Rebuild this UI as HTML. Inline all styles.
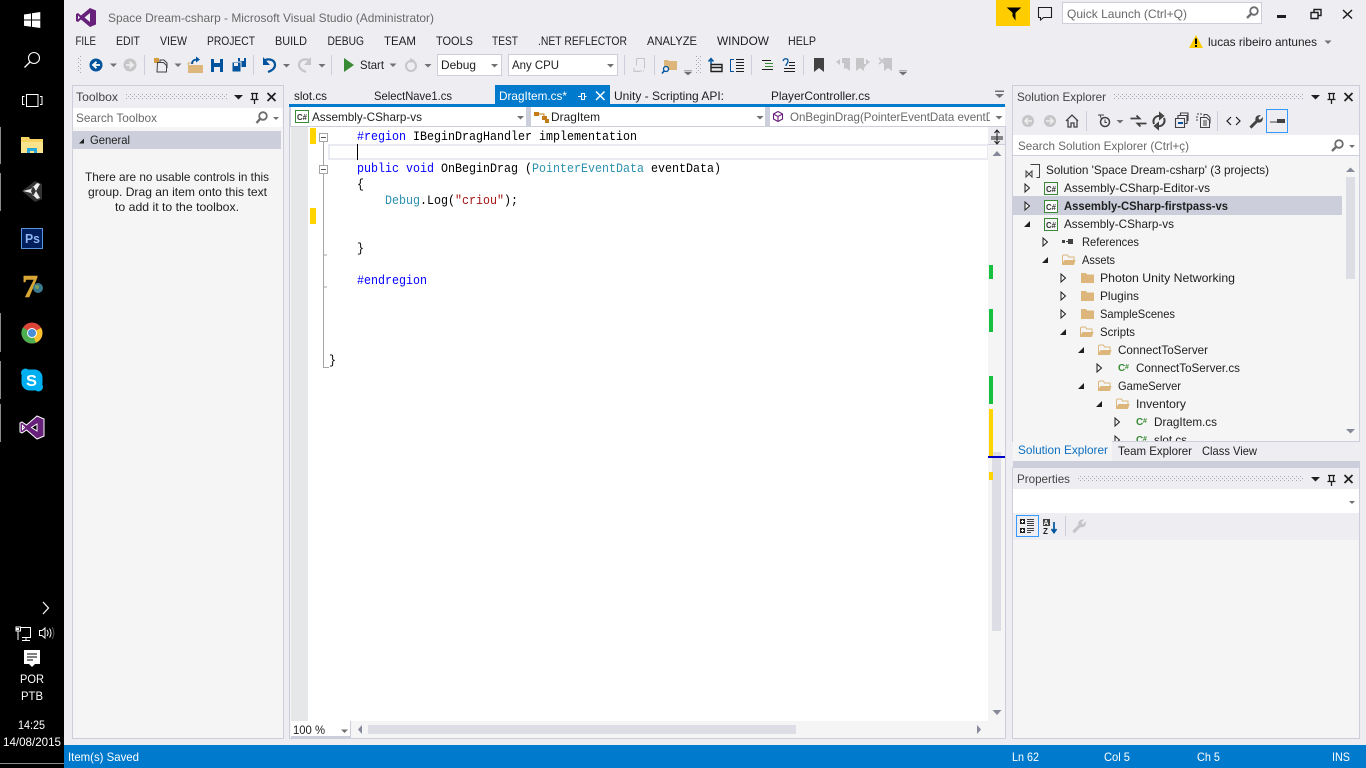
<!DOCTYPE html>
<html><head><meta charset="utf-8"><title>Space Dream-csharp - Microsoft Visual Studio</title>
<style>
html,body{margin:0;padding:0;background:#eeeef2;overflow:hidden;width:1366px;height:768px}
svg{display:block}
text{font-family:"Liberation Sans",sans-serif;font-size:12px;fill:#1e1e1e;white-space:pre}
.g{fill:#696969}.w{fill:#fff}
.c{font-family:"Liberation Mono",monospace;font-size:13px;fill:#000}
.k{fill:#00f}.ty{fill:#2b91af}.s{fill:#a31515}
.l{stroke:#c4c6d4;stroke-width:1;fill:none}
</style></head><body>
<svg xmlns="http://www.w3.org/2000/svg" width="1366" height="768" viewBox="0 0 1366 768">
<defs>
<pattern id="dots" width="4" height="4" patternUnits="userSpaceOnUse"><rect width="1" height="1" fill="#a5a6b0"/><rect x="2" y="2" width="1" height="1" fill="#a5a6b0"/></pattern>
<clipPath id="c3"><rect x="770" y="107" width="220" height="19"/></clipPath>
<clipPath id="treeclip"><rect x="1013" y="156" width="346" height="285"/></clipPath>
<path id="exp" d="M.5 .5L5 4.5L.5 8.5Z" fill="#f5f5f5" stroke="#1e1e1e"/>
<path id="col" d="M6 0V6H0Z" fill="#1e1e1e"/>
<path id="fc" d="M0 1h5l1 1.500h7V11H0Z" fill="#dcb67a"/>
<g id="fo"><path d="M.5 11V2l1-1h4l1 2h5.500v3" fill="none" stroke="#dcb67a"/><path d="M0 11V10L2.500 6H13.500L12 11Z" fill="#dcb67a"/></g>
<path id="dd" d="M0 0h7l-3.500 3.500Z" fill="#717171"/>
<g id="pinx"><path d="M0 0h9l-4.500 4.500Z" fill="#1e1e1e" transform="translate(0,3)"/><path d="M17 1.500h7M18.500 1.500v6h4v-6M16.500 7.500h8M20.500 7.500v4.500" stroke="#1e1e1e" fill="none" stroke-width="1.300"/><path d="M33.500 1l8 8M41.500 1l-8 8" stroke="#1e1e1e" stroke-width="1.700" fill="none"/></g>
</defs>

<rect width="1366" height="768" fill="#eeeef2"/>

<!-- taskbar -->
<rect x="0" y="0" width="64" height="768" fill="#000"/>
<rect x="0" y="127" width="1" height="37" fill="#8a8a8a"/><rect x="0" y="173" width="1" height="38" fill="#8a8a8a"/><rect x="0" y="313" width="1" height="39" fill="#8a8a8a"/><rect x="0" y="361" width="1" height="38" fill="#8a8a8a"/><rect x="0" y="404" width="1" height="38" fill="#8a8a8a"/>
<rect x="0" y="763" width="64" height="1" fill="#8c8c8c"/>
<path d="M24 14.500L31 13.500V19.500H24ZM32 13.300L40.300 12V19.500H32ZM24 20.500H31V26.800L24 25.800ZM32 20.500H40.300V28L32 26.900Z" fill="#fff"/>
<circle cx="34" cy="58" r="5.500" fill="none" stroke="#fff" stroke-width="1.100"/><path d="M30 62L24.500 67.500" stroke="#fff" stroke-width="1.300"/>
<path d="M26.500 94.500h11.500v12h-11.500ZM24.500 96.500h-2v8h2M40 96.500h2v8h-2" fill="none" stroke="#fff"/>
<!-- explorer -->
<path d="M21 137h8l1 2h13v14H21Z" fill="#f6d365"/><rect x="21" y="142" width="22" height="11" fill="#fbe38e"/><path d="M27 153v-5h10v5h-3v-2h-4v2Z" fill="#27a7e0"/>
<!-- unity -->
<path d="M22 191L35 181l7 3 0 15-7 3Z" fill="#333"/><path d="M23 191l8-2 6-6 3 1-4 7 4 7-3 1-6-6ZM31 191h5l-3-5ZM31 191h5l-3 5Z" fill="#eee" fill-rule="evenodd"/>
<!-- ps -->
<rect x="21.500" y="228.500" width="21" height="20" fill="#001d5c" stroke="#5a94dc"/>
<text x="25" y="243" style="font-size:13px;font-weight:bold;fill:#8fb9f0" textLength="15" lengthAdjust="spacingAndGlyphs">Ps</text>
<!-- 7 -->
<text x="22" y="297" style="font-family:'Liberation Serif',serif;font-size:32px;font-weight:bold;fill:#d8a636;stroke:#d8a636;stroke-width:.6" textLength="16" lengthAdjust="spacingAndGlyphs">7</text>
<circle cx="38" cy="288" r="5" fill="#3a7a8c"/><circle cx="37" cy="287" r="2" fill="#7aa05a"/>
<!-- chrome -->
<circle cx="32" cy="333" r="10.500" fill="#db4437"/><path d="M32 333L22.900 338.250A10.500 10.500 0 0 1 23 327.500Z" fill="#4caf50"/><path d="M32 333L22.900 338.250A10.500 10.500 0 0 0 41.100 338.250Z" fill="#4caf50"/><path d="M32 333L41.100 327.750A10.500 10.500 0 0 1 36 342.700Z" fill="#fbc02d"/><circle cx="32" cy="333" r="5" fill="#fff"/><circle cx="32" cy="333" r="4" fill="#4a8ed8"/>
<!-- skype -->
<rect x="21.500" y="369.500" width="21" height="21" rx="8" fill="#00aff0"/><circle cx="25.500" cy="373" r="4.500" fill="#00aff0"/><circle cx="38.500" cy="387" r="4.500" fill="#00aff0"/>
<text x="26" y="386" style="font-size:16px;font-weight:bold;fill:#fff" textLength="11" lengthAdjust="spacingAndGlyphs">S</text>
<!-- VS taskbar -->
<path d="M37 416L44 419V436L37 439L26.500 430L22 433L20 432V423L22 422L26.500 425ZM37 424L31.500 427.500L37 431ZM22.500 425.500V429.500L24.500 427.500Z" fill="#68217a" stroke="#fff" stroke-width="1" fill-rule="evenodd"/>
<!-- tray -->
<path d="M43 602l5.500 6-5.500 6" stroke="#fff" fill="none" stroke-width="1.200"/>
<path d="M20.500 627.500h10v10h-8.500M16 627h4.500v4H16ZM18 631v9M26 637.500v3M22 640.500h8" stroke="#fff" fill="none"/><rect x="16" y="628" width="3" height="2" fill="#fff"/>
<path d="M39.500 630.500h2.500l3-2.500v10l-3-2.500h-2.500ZM47 630c1.500 2 1.500 4 0 6M49.500 628.500c2 3 2 6 0 9" stroke="#fff" fill="none"/><path d="M52 627c2.500 4 2.500 8 0 12" stroke="#555" fill="none"/>
<path d="M24 650h16v14h-5l-3 3-3-3h-5Z" fill="#fff"/><path d="M27 654h10M27 657h10M27 660h6" stroke="#000"/>
<text x="20" y="683" class="w" textLength="24" lengthAdjust="spacingAndGlyphs">POR</text>
<text x="21" y="700" class="w" textLength="22" lengthAdjust="spacingAndGlyphs">PTB</text>
<text x="18" y="729" class="w" textLength="27" lengthAdjust="spacingAndGlyphs">14:25</text>
<text x="3" y="746" class="w" textLength="58" lengthAdjust="spacingAndGlyphs">14/08/2015</text>

<!-- title -->
<path d="M90 8L96 10.500V24.500L90 27L81 19.500L78 22L76 21V14L78 13L81 15.500ZM90 13L84.500 17.500L90 22ZM78 15.500V19.500L80 17.500Z" fill="#68217a" fill-rule="evenodd"/>
<text x="108" y="22" class="g" textLength="326" lengthAdjust="spacingAndGlyphs">Space Dream-csharp - Microsoft Visual Studio (Administrator)</text>

<!-- menu -->
<text x="75.500" y="45" textLength="20.500" lengthAdjust="spacingAndGlyphs">FILE</text>
<text x="116" y="45" textLength="24" lengthAdjust="spacingAndGlyphs">EDIT</text>
<text x="160" y="45" textLength="27" lengthAdjust="spacingAndGlyphs">VIEW</text>
<text x="207" y="45" textLength="48" lengthAdjust="spacingAndGlyphs">PROJECT</text>
<text x="275" y="45" textLength="32" lengthAdjust="spacingAndGlyphs">BUILD</text>
<text x="327.500" y="45" textLength="36.500" lengthAdjust="spacingAndGlyphs">DEBUG</text>
<text x="384" y="45" textLength="32" lengthAdjust="spacingAndGlyphs">TEAM</text>
<text x="436" y="45" textLength="37" lengthAdjust="spacingAndGlyphs">TOOLS</text>
<text x="492" y="45" textLength="26" lengthAdjust="spacingAndGlyphs">TEST</text>
<text x="538" y="45" textLength="89" lengthAdjust="spacingAndGlyphs">.NET REFLECTOR</text>
<text x="647" y="45" textLength="50" lengthAdjust="spacingAndGlyphs">ANALYZE</text>
<text x="717" y="45" textLength="52" lengthAdjust="spacingAndGlyphs">WINDOW</text>
<text x="788" y="45" textLength="28" lengthAdjust="spacingAndGlyphs">HELP</text>

<!-- top right -->
<rect x="996" y="0" width="34" height="26" fill="#ffcc00"/>
<path d="M1008 8h12l-5 4.500v6.500l-2-3v-3.500Z" fill="#000" stroke="#000"/>
<path d="M1038.500 7.500h13v10h-8l-3 2.500v-2.500h-2Z" fill="none" stroke="#1e1e1e" stroke-width="1.100"/>
<rect x="1062.500" y="2.500" width="199" height="21" fill="#fff" stroke="#ccced9"/>
<text x="1067" y="18" class="g" textLength="120" lengthAdjust="spacingAndGlyphs">Quick Launch (Ctrl+Q)</text>
<circle cx="1254" cy="11" r="3.800" fill="none" stroke="#6d6d70" stroke-width="1.800"/><path d="M1251 14l-4 4" stroke="#6d6d70" stroke-width="2.300"/>
<rect x="1277" y="15" width="9" height="3" fill="#1e1e1e"/>
<path d="M1311 12.500h7v6h-7ZM1314 12v-2.500h7v6h-3" fill="none" stroke="#1e1e1e" stroke-width="1.400"/>
<path d="M1343 10l9 8.500M1352 10l-9 8.500" stroke="#1e1e1e" stroke-width="1.500"/>
<path d="M1196 35l7 13h-14Z" fill="#ffcc00"/><rect x="1195" y="38.500" width="2" height="5.500" fill="#000"/><rect x="1195" y="45" width="2" height="2" fill="#000"/>
<text x="1208" y="46" textLength="109" lengthAdjust="spacingAndGlyphs">lucas ribeiro antunes</text>
<use href="#dd" x="1324.500" y="40.500"/>

<!-- toolbar -->
<rect x="77" y="56" width="5" height="18" fill="url(#dots)"/>
<circle cx="96" cy="65" r="6.500" fill="#00539c"/><path d="M100 65h-6M96.500 61.800L93 65l3.500 3.200" stroke="#fff" stroke-width="1.800" fill="none"/>
<use href="#dd" x="110" y="63.500"/>
<circle cx="130" cy="65" r="6.500" fill="#c6c6c8"/><path d="M126 65h6M129.500 61.800L133 65l-3.500 3.200" stroke="#eee" stroke-width="1.800" fill="none"/>
<rect x="144" y="55" width="1" height="20" fill="#cccedb"/>
<rect x="154" y="58" width="5" height="5" fill="#d69a42"/>
<path d="M157.500 62.500h6l3 3v6.500h-9.500ZM160 62.500V60h4l3 3v5" fill="#eeeef2" stroke="#424242"/>
<use href="#dd" x="174.500" y="63.500"/>
<path d="M188 65h15v8h-15Z" fill="#dcb67a"/><path d="M188 65v-2h6" stroke="#dcb67a" fill="none"/>
<path d="M192 64c0-3 2-4.500 5-4.500" stroke="#00539c" stroke-width="1.800" fill="none"/><path d="M196 56.500l4 3-4 3Z" fill="#00539c"/>
<path d="M211 59h12v13h-12Z" fill="#00539c"/><rect x="214" y="59" width="6" height="4" fill="#eeeef2"/><rect x="214" y="67" width="6" height="5" fill="#eeeef2"/>
<path d="M238 58h8v9h-8Z" fill="#00539c"/><rect x="240" y="58" width="4" height="3" fill="#eeeef2"/>
<path d="M232 62h9v10h-9Z" fill="#00539c" stroke="#eeeef2"/><rect x="234" y="63" width="4" height="3" fill="#eeeef2"/>
<rect x="253" y="55" width="1" height="20" fill="#cccedb"/>
<path d="M265 60c6-2 10 1 10 5 0 3-3 5.500-7 7" stroke="#00539c" stroke-width="2.200" fill="none"/><path d="M263 57v8h7Z" fill="#00539c"/>
<use href="#dd" x="283" y="64"/>
<path d="M309 60c-6-2-10 1-10 5 0 3 3 5.500 7 7" stroke="#c6c6c8" stroke-width="2.200" fill="none"/><path d="M311 57v8h-7Z" fill="#c6c6c8"/>
<use href="#dd" x="318.500" y="64"/>
<rect x="331" y="55" width="1" height="20" fill="#cccedb"/>
<path d="M344 58l10 7-10 7Z" fill="#388a34"/>
<text x="360" y="69" textLength="24" lengthAdjust="spacingAndGlyphs">Start</text>
<use href="#dd" x="389.500" y="63.500"/>
<circle cx="411" cy="66" r="5" fill="none" stroke="#c6c6c8" stroke-width="2"/><path d="M410 58l5 2.500-5 2.500Z" fill="#c6c6c8"/>
<use href="#dd" x="424.500" y="64"/>
<rect x="437.500" y="54.500" width="64" height="21" fill="#fff" stroke="#cccedb"/>
<text x="441" y="69" textLength="35" lengthAdjust="spacingAndGlyphs">Debug</text>
<use href="#dd" x="491" y="64"/>
<rect x="508.500" y="54.500" width="109" height="21" fill="#fff" stroke="#cccedb"/>
<text x="512" y="69" textLength="47" lengthAdjust="spacingAndGlyphs">Any CPU</text>
<use href="#dd" x="607" y="64"/>
<rect x="624" y="55" width="1" height="20" fill="#cccedb"/>
<path d="M636.500 58.500h8v10M634 68v3.500h6M636.500 58.500v7" stroke="#c6c6c8" fill="none"/><path d="M634 71h10" stroke="#c6c6c8" stroke-dasharray="2 1"/>
<rect x="654" y="55" width="1" height="20" fill="#cccedb"/>
<path d="M664 60h4l1 1h8v9h-13Z" fill="#dcb67a"/><circle cx="666" cy="69" r="2.500" fill="#eeeef2" stroke="#00539c" stroke-width="1.300"/><path d="M664 71l-2 2.500" stroke="#00539c" stroke-width="1.500"/>
<path d="M684 70.500h8M684.500 72l3.500 3 3.500-3Z" fill="#717171" stroke="#717171" stroke-width=".6"/>
<rect x="696" y="56" width="5" height="18" fill="url(#dots)"/>
<path d="M711 64.500h11v7h-11ZM711 67.500h11" stroke="#1e1e1e" stroke-width="1.400" fill="none"/><path d="M711 64v-5M708.500 61.500l2.500-3 2.500 3" stroke="#00539c" stroke-width="1.500" fill="none"/>
<path d="M736 59.500h8M736 62.500h8M736 65.500h8M736 68.500h8M736 71.500h8" stroke="#1e1e1e"/><path d="M734 59.500h-3.500v12h3.500" stroke="#00539c" fill="none"/>
<rect x="751" y="55" width="1" height="20" fill="#cccedb"/>
<path d="M762 60.500h9M762 69.500h11" stroke="#1e1e1e"/><path d="M765 63.500h8M765 66.500h8" stroke="#388a34"/>
<path d="M789 62.500h6M789 65.500h6M784 68.500h11M784 71.500h11" stroke="#1e1e1e"/><path d="M783 61c1-3 5-3 5 0s-2 2-2 5" stroke="#00539c" fill="none" stroke-width="1.300"/>
<rect x="803" y="55" width="1" height="20" fill="#cccedb"/>
<path d="M814 58h10v14l-5-4-5 4Z" fill="#424242"/>
<path d="M842 58h8v13l-4-3-2 1v-6h-2ZM836 62l4-3v6Z" fill="#c6c6c8"/>
<path d="M856 58h8v6h3l-3 4v3l-4-3-4 3ZM866 59l4 3-4 3Z" fill="#c6c6c8"/>
<path d="M884 58h8v13l-4-3-4 3Z" fill="#c6c6c8"/><path d="M879 58l6 6M885 58l-6 6" stroke="#c6c6c8" stroke-width="1.600"/>
<path d="M899 70.500h8M899.500 72l3.500 3 3.500-3Z" fill="#717171" stroke="#717171" stroke-width=".6"/>

<!-- Toolbox panel -->
<rect x="72.500" y="85.500" width="211" height="653" fill="#f5f5f5" stroke="#cccedb"/>
<rect x="73" y="86" width="210" height="22" fill="#eeeef2"/>
<text x="76" y="101" style="fill:#444" textLength="42" lengthAdjust="spacingAndGlyphs">Toolbox</text>
<rect x="125" y="94" width="103" height="5" fill="url(#dots)"/>
<use href="#pinx" x="234" y="92"/>
<rect x="73" y="108" width="209" height="19" fill="#fff"/>
<text x="76" y="122" class="g" textLength="81" lengthAdjust="spacingAndGlyphs">Search Toolbox</text>
<circle cx="263" cy="116" r="3.800" fill="none" stroke="#6d6d70" stroke-width="1.800"/><path d="M260 119l-3.500 4" stroke="#6d6d70" stroke-width="2.300"/>
<path d="M273 117h6l-3 3Z" fill="#717171"/>
<rect x="73" y="131" width="208" height="18" fill="#cccedb"/>
<path d="M84 138.500V143.500H79Z" fill="#1e1e1e"/>
<text x="90" y="144" textLength="40" lengthAdjust="spacingAndGlyphs">General</text>
<text x="85" y="181" textLength="184" lengthAdjust="spacingAndGlyphs">There are no usable controls in this</text>
<text x="88" y="196" textLength="179" lengthAdjust="spacingAndGlyphs">group. Drag an item onto this text</text>
<text x="115" y="211" textLength="124" lengthAdjust="spacingAndGlyphs">to add it to the toolbox.</text>

<!-- Editor -->
<text x="294" y="100" textLength="33" lengthAdjust="spacingAndGlyphs">slot.cs</text>
<text x="374" y="100" textLength="78" lengthAdjust="spacingAndGlyphs">SelectNave1.cs</text>
<rect x="495" y="85" width="115" height="19" fill="#007acc"/>
<text x="499" y="100" class="w" textLength="68" lengthAdjust="spacingAndGlyphs">DragItem.cs*</text>
<path d="M578 96.500h3M581.500 93.500v6h3v-6ZM584.500 96.500h2" stroke="#fff" fill="none"/>
<path d="M596 91.500l8.500 8.500M604.500 91.500L596 100" stroke="#fff" stroke-width="1.500"/>
<text x="614" y="100" textLength="110" lengthAdjust="spacingAndGlyphs">Unity - Scripting API:</text>
<text x="771" y="100" textLength="99" lengthAdjust="spacingAndGlyphs">PlayerController.cs</text>
<rect x="289" y="104" width="716" height="3" fill="#007acc"/>
<path d="M995 90.500h9v1.500h-9ZM995 94h9l-4.500 4Z" fill="#717171"/>
<rect x="289" y="107" width="716" height="632" fill="#f5f5f5"/>
<rect x="289" y="107" width="716" height="20" fill="#cccedb"/>
<rect x="291" y="107" width="235" height="19" fill="#fff"/>
<rect x="531" y="107" width="234" height="19" fill="#fff"/>
<rect x="770" y="107" width="235" height="19" fill="#fff"/>
<rect x="295.500" y="110.500" width="13" height="12" fill="#fff" stroke="#388a34"/>
<text x="297" y="120" style="font-size:8px;font-weight:bold;fill:#333" textLength="10" lengthAdjust="spacingAndGlyphs">C#</text>
<text x="312" y="121" textLength="110" lengthAdjust="spacingAndGlyphs">Assembly-CSharp-vs</text>
<use href="#dd" x="517" y="116"/>
<path d="M534 112h5v4h-5ZM542 116h5v4h-5ZM545 119h4v4h-4Z" fill="#c27d1a"/><path d="M538 114h6v3M545 119v1" stroke="#c27d1a" fill="none"/>
<text x="551" y="121" textLength="49" lengthAdjust="spacingAndGlyphs">DragItem</text>
<use href="#dd" x="756.500" y="116"/>
<path d="M778 111.500l4.500 2.500v5l-4.500 2.500-4.500-2.500v-5ZM773.500 114l4.500 2.500 4.500-2.500M778 116.500v5" fill="none" stroke="#68217a" stroke-width="1.100"/>
<g clip-path="url(#c3)"><text x="790" y="121" class="g" textLength="224" lengthAdjust="spacingAndGlyphs">OnBeginDrag(PointerEventData eventData)</text></g>
<use href="#dd" x="995.500" y="116"/>

<rect x="291" y="127" width="17" height="594" fill="#e6e7e8"/>
<rect x="308" y="127" width="680" height="594" fill="#fff"/>
<rect x="310" y="128" width="6" height="16" fill="#ffd400"/>
<rect x="310" y="208" width="6" height="16" fill="#ffd400"/>
<path d="M323.500 142v225.500H329M324 255h3M324 287h3" stroke="#a5a5a5" fill="none"/>
<rect x="319.500" y="133.500" width="8" height="8" fill="#fff" stroke="#a5a5a5"/><path d="M321 137.500h5" stroke="#555"/>
<rect x="319.500" y="165.500" width="8" height="8" fill="#fff" stroke="#a5a5a5"/><path d="M321 169.500h5" stroke="#555"/>
<rect x="329" y="145" width="659" height="14" fill="#fff" stroke="#eaeaf2" stroke-width="2"/>
<rect x="357" y="144" width="1" height="16" fill="#000"/>

<text x="357" y="140" class="c k" textLength="49" lengthAdjust="spacingAndGlyphs">#region</text>
<text x="413" y="140" class="c" textLength="224" lengthAdjust="spacingAndGlyphs">IBeginDragHandler implementation</text>
<text x="357" y="172" class="c k" textLength="42" lengthAdjust="spacingAndGlyphs">public</text>
<text x="406" y="172" class="c k" textLength="28" lengthAdjust="spacingAndGlyphs">void</text>
<text x="441" y="172" class="c" textLength="77" lengthAdjust="spacingAndGlyphs">OnBeginDrag</text>
<text x="525" y="172" class="c" textLength="7" lengthAdjust="spacingAndGlyphs">(</text>
<text x="532" y="172" class="c ty" textLength="112" lengthAdjust="spacingAndGlyphs">PointerEventData</text>
<text x="651" y="172" class="c" textLength="70" lengthAdjust="spacingAndGlyphs">eventData)</text>
<text x="357" y="188" class="c" textLength="7" lengthAdjust="spacingAndGlyphs">{</text>
<text x="385" y="204" class="c ty" textLength="35" lengthAdjust="spacingAndGlyphs">Debug</text>
<text x="420" y="204" class="c" textLength="35" lengthAdjust="spacingAndGlyphs">.Log(</text>
<text x="455" y="204" class="c s" textLength="49" lengthAdjust="spacingAndGlyphs">"criou"</text>
<text x="504" y="204" class="c" textLength="14" lengthAdjust="spacingAndGlyphs">);</text>
<text x="357" y="252" class="c" textLength="7" lengthAdjust="spacingAndGlyphs">}</text>
<text x="357" y="284" class="c k" textLength="70" lengthAdjust="spacingAndGlyphs">#endregion</text>
<text x="329" y="364" class="c" textLength="7" lengthAdjust="spacingAndGlyphs">}</text>

<!-- editor vertical scrollbar -->
<rect x="988" y="127" width="17" height="594" fill="#f5f5f5"/>
<rect x="988" y="127" width="17" height="17" fill="#eeeef2"/><rect x="988" y="144" width="17" height="1" fill="#cccedb"/>
<path d="M997 130.500v13M991 137h12M991 139h12M994.500 133l2.500-3 2.500 3M994.500 141l2.500 3 2.500-3" stroke="#1e1e1e" fill="none"/>
<path d="M992.500 156l4.500-5 4.500 5Z" fill="#868999"/>
<rect x="992" y="452" width="9" height="179" fill="#dddde5"/>
<rect x="989" y="265" width="4" height="14" fill="#17c03f"/>
<rect x="989" y="309" width="4" height="23" fill="#17c03f"/>
<rect x="989" y="376" width="4" height="28" fill="#17c03f"/>
<rect x="989" y="409" width="4" height="47" fill="#ffd400"/>
<rect x="989" y="472" width="4" height="8" fill="#ffd400"/>
<rect x="988" y="456" width="17" height="2" fill="#0000c8"/>
<path d="M992.500 710l4.500 5 4.500-5Z" fill="#868999"/>
<!-- editor hscroll -->
<rect x="291" y="721" width="714" height="17" fill="#f5f5f5"/>
<rect x="291" y="721" width="60" height="17" fill="#fff"/><rect x="291" y="736" width="60" height="2" fill="#cccedb"/><rect x="350" y="721" width="1" height="17" fill="#cccedb"/>
<text x="293" y="734" style="fill:#222" textLength="32" lengthAdjust="spacingAndGlyphs">100 %</text>
<use href="#dd" x="341" y="729.500"/>
<path d="M362 725v9l-4-4.500Z" fill="#868999"/>
<rect x="368" y="725" width="428" height="9" fill="#dddde5"/>
<path d="M977 725v9l4-4.500Z" fill="#868999"/>
<rect x="289.500" y="126.500" width="716" height="612" fill="none" stroke="#cccedb"/>

<!-- Solution Explorer -->
<rect x="1012.500" y="85.500" width="347" height="356" fill="#f5f5f5" stroke="#cccedb"/>
<rect x="1013" y="86" width="346" height="70" fill="#eeeef2"/>
<text x="1017" y="101" style="fill:#444" textLength="89" lengthAdjust="spacingAndGlyphs">Solution Explorer</text>
<rect x="1114" y="94" width="189" height="5" fill="url(#dots)"/>
<use href="#pinx" x="1311" y="92"/>
<!-- SE toolbar -->
<circle cx="1028" cy="121" r="6" fill="#c6c6c8"/><path d="M1032 121h-6M1028 118l-3 3 3 3" stroke="#eee" stroke-width="1.600" fill="none"/>
<circle cx="1050" cy="121" r="6" fill="#c6c6c8"/><path d="M1046 121h6M1050 118l3 3-3 3" stroke="#eee" stroke-width="1.600" fill="none"/>
<path d="M1066 121l6-6 6 6M1068 120v7h3v-4h3v4h3v-7" stroke="#424242" stroke-width="1.300" fill="none"/>
<rect x="1086" y="111" width="1" height="20" fill="#cccedb"/>
<circle cx="1105" cy="122" r="4.500" fill="none" stroke="#424242" stroke-width="1.500"/><path d="M1098 115h6M1100 115l1.500 4M1105 119.500v3h2" stroke="#424242" fill="none"/>
<use href="#dd" x="1116.500" y="120"/>
<path d="M1131 119h9l-3-3M1147 124h-9l3 3" stroke="#424242" stroke-width="1.800" fill="none" transform="translate(-.5 -.5)"/>
<path d="M1154 124c-2-5 2-9 7-8M1164 118c2 5-2 9-7 8M1160 113.500v5l3-2.500ZM1158 123.500v5l-3-2.500Z" stroke="#424242" stroke-width="2" fill="none"/>
<path d="M1175.500 118.500h9v9h-9ZM1178 118v-2.500h9v8h-2M1180.500 115.500v-2.500h7.500v8" fill="none" stroke="#424242" stroke-width="1.100"/><rect x="1178" y="122" width="5" height="2" fill="#00539c"/>
<path d="M1197 114h2M1200 114h2M1197 116v2M1197 119v2" stroke="#424242"/><path d="M1200.500 117.500h6l3 3v7h-9ZM1203 121h4M1203 123h4M1203 125h4" fill="none" stroke="#424242"/><path d="M1204 116.500v-2h3l3 3v6" fill="none" stroke="#424242"/>
<rect x="1217" y="111" width="1" height="20" fill="#cccedb"/>
<path d="M1231 117l-4 4 4 4M1236 117l4 4-4 4" fill="none" stroke="#1e1e1e" stroke-width="1.200"/>
<path d="M1250 126.500l6-6c-1-3 1-5 4-5l-2 2 .5 2 2 .5 2-2c0 3-2 5-5 4l-6 6Z" fill="#424242" stroke="#424242" stroke-width=".8"/>
<rect x="1266.500" y="109.500" width="21" height="23" fill="#eeeef2" stroke="#3399ff"/>
<path d="M1270 122h8" stroke="#424242"/><rect x="1277" y="119" width="8" height="4" fill="#424242"/>
<rect x="1013" y="135" width="346" height="20" fill="#fff"/>
<text x="1018" y="150" class="g" textLength="171" lengthAdjust="spacingAndGlyphs">Search Solution Explorer (Ctrl+ç)</text>
<circle cx="1339" cy="144" r="3.800" fill="none" stroke="#6d6d70" stroke-width="1.800"/><path d="M1336 147l-4 4" stroke="#6d6d70" stroke-width="2.300"/>
<path d="M1349 145h6l-3 3Z" fill="#717171"/>
<rect x="1013" y="155" width="346" height="1" fill="#cccedb"/>

<g clip-path="url(#treeclip)">
<rect x="1013" y="196" width="329" height="19" fill="#cccedb"/>
<path d="M1030.500 164.500h9v13h-3M1026 171l3 3 3-3v6l-3-3-3 3Z" fill="none" stroke="#424242"/>
<text x="1046" y="174" textLength="223" lengthAdjust="spacingAndGlyphs">Solution 'Space Dream-csharp' (3 projects)</text>
<use href="#exp" x="1024.500" y="183.500"/>
<rect x="1044.500" y="182.500" width="13" height="12" fill="#f5f5f5" stroke="#388a34"/><text x="1046" y="192" style="font-size:8px;font-weight:bold;fill:#333" textLength="10" lengthAdjust="spacingAndGlyphs">C#</text>
<text x="1064" y="192" textLength="146" lengthAdjust="spacingAndGlyphs">Assembly-CSharp-Editor-vs</text>
<use href="#exp" x="1024.500" y="201.500"/>
<rect x="1044.500" y="200.500" width="13" height="12" fill="#fff" stroke="#388a34"/><text x="1046" y="210" style="font-size:8px;font-weight:bold;fill:#333" textLength="10" lengthAdjust="spacingAndGlyphs">C#</text>
<text x="1064" y="210" style="font-weight:bold" textLength="164" lengthAdjust="spacingAndGlyphs">Assembly-CSharp-firstpass-vs</text>
<use href="#col" x="1024" y="221"/>
<rect x="1044.500" y="218.500" width="13" height="12" fill="#f5f5f5" stroke="#388a34"/><text x="1046" y="228" style="font-size:8px;font-weight:bold;fill:#333" textLength="10" lengthAdjust="spacingAndGlyphs">C#</text>
<text x="1064" y="228" textLength="110" lengthAdjust="spacingAndGlyphs">Assembly-CSharp-vs</text>
<use href="#exp" x="1042.500" y="237.500"/>
<rect x="1062" y="240" width="3" height="3" fill="#424242"/><rect x="1066" y="241" width="2" height="1" fill="#424242"/><rect x="1068" y="239" width="5" height="5" fill="#424242"/>
<text x="1082" y="246" textLength="57" lengthAdjust="spacingAndGlyphs">References</text>
<use href="#col" x="1042" y="257"/>
<use href="#fo" x="1062" y="254"/>
<text x="1082" y="264" textLength="33" lengthAdjust="spacingAndGlyphs">Assets</text>
<use href="#exp" x="1060.500" y="273.500"/><use href="#fc" x="1081" y="272"/>
<text x="1100" y="282" textLength="135" lengthAdjust="spacingAndGlyphs">Photon Unity Networking</text>
<use href="#exp" x="1060.500" y="291.500"/><use href="#fc" x="1081" y="290"/>
<text x="1100" y="300" textLength="39" lengthAdjust="spacingAndGlyphs">Plugins</text>
<use href="#exp" x="1060.500" y="309.500"/><use href="#fc" x="1081" y="308"/>
<text x="1100" y="318" textLength="75" lengthAdjust="spacingAndGlyphs">SampleScenes</text>
<use href="#col" x="1060" y="329"/><use href="#fo" x="1080" y="326"/>
<text x="1100" y="336" textLength="35" lengthAdjust="spacingAndGlyphs">Scripts</text>
<use href="#col" x="1078" y="347"/><use href="#fo" x="1098" y="344"/>
<text x="1118" y="354" textLength="90" lengthAdjust="spacingAndGlyphs">ConnectToServer</text>
<use href="#exp" x="1096.500" y="363.500"/>
<text x="1118" y="371" style="font-size:10px;font-weight:bold;fill:#388a34">C</text><text x="1125" y="369" style="font-size:7px;font-weight:bold;fill:#388a34">#</text>
<text x="1136" y="372" textLength="104" lengthAdjust="spacingAndGlyphs">ConnectToServer.cs</text>
<use href="#col" x="1078" y="383"/><use href="#fo" x="1098" y="380"/>
<text x="1118" y="390" textLength="63" lengthAdjust="spacingAndGlyphs">GameServer</text>
<use href="#col" x="1096" y="401"/><use href="#fo" x="1116" y="398"/>
<text x="1136" y="408" textLength="50" lengthAdjust="spacingAndGlyphs">Inventory</text>
<use href="#exp" x="1114.500" y="417.500"/>
<text x="1136" y="425" style="font-size:10px;font-weight:bold;fill:#388a34">C</text><text x="1143" y="423" style="font-size:7px;font-weight:bold;fill:#388a34">#</text>
<text x="1154" y="426" textLength="63" lengthAdjust="spacingAndGlyphs">DragItem.cs</text>
<use href="#exp" x="1114.500" y="435.500"/>
<text x="1136" y="443" style="font-size:10px;font-weight:bold;fill:#388a34">C</text><text x="1143" y="441" style="font-size:7px;font-weight:bold;fill:#388a34">#</text>
<text x="1154" y="444" textLength="33" lengthAdjust="spacingAndGlyphs">slot.cs</text>
</g>
<!-- tree scrollbar -->
<path d="M1346 172l4.500-4.500 4.500 4.500Z" fill="#868999"/>
<rect x="1346" y="177" width="9" height="102" fill="#dddde5"/>
<path d="M1346 429l4.500 4.500 4.500-4.500Z" fill="#868999"/>
<rect x="1012.500" y="85.500" width="347" height="356" fill="none" stroke="#cccedb"/>

<!-- bottom tabs -->
<rect x="1013" y="441" width="99" height="20" fill="#f5f5f5"/>
<text x="1018" y="454" style="fill:#0e70c0" textLength="90" lengthAdjust="spacingAndGlyphs">Solution Explorer</text>
<text x="1118" y="455" textLength="74" lengthAdjust="spacingAndGlyphs">Team Explorer</text>
<text x="1202" y="455" textLength="55" lengthAdjust="spacingAndGlyphs">Class View</text>
<rect x="1013" y="461" width="347" height="7" fill="#cccedb"/>

<!-- Properties -->
<rect x="1012.500" y="467.500" width="347" height="271" fill="#f5f5f5" stroke="#cccedb"/>
<rect x="1013" y="468" width="346" height="21" fill="#eeeef2"/>
<text x="1017" y="483" style="fill:#444" textLength="53" lengthAdjust="spacingAndGlyphs">Properties</text>
<rect x="1078" y="476" width="225" height="5" fill="url(#dots)"/>
<use href="#pinx" x="1311" y="474"/>
<rect x="1013" y="489" width="346" height="24" fill="#fff"/>
<path d="M1349 501h6l-3 3Z" fill="#717171"/>
<rect x="1013" y="513" width="346" height="27" fill="#eeeef2"/>
<rect x="1016.500" y="515.500" width="22" height="21" fill="#eeeef2" stroke="#3399ff"/>
<rect x="1020" y="519" width="5" height="5" fill="#1e1e1e"/><rect x="1020" y="528" width="5" height="5" fill="#1e1e1e"/>
<path d="M1021 521.500h3M1021 530.500h3M1022.500 520v3M1022.500 529v3" stroke="#fff"/>
<path d="M1027 519.500h7M1027 521.500h7M1027 523.500h7M1027 525.500h7M1027 528.500h7M1027 530.500h7M1027 532.500h4" stroke="#424242"/>
<rect x="1043" y="519" width="7" height="7" fill="#424242"/>
<text x="1043.500" y="525" style="font-size:7px;font-weight:bold;fill:#fff">A</text>
<text x="1043" y="534" style="font-size:8px;font-weight:bold;fill:#1e1e1e">Z</text>
<path d="M1054 522v10M1051.500 529l2.500 3.500 2.500-3.500" stroke="#00539c" stroke-width="1.700" fill="none"/>
<rect x="1065" y="516" width="1" height="20" fill="#cccedb"/>
<path d="M1073 531l6-6c-1-3 1-5 4-5l-2 2 .5 2 2 .5 2-2c0 3-2 5-5 4l-6 6Z" fill="#c6c6c8" stroke="#c6c6c8"/>

<!-- status bar -->
<rect x="64" y="745" width="1302" height="23" fill="#007acc"/>
<text x="68" y="761" class="w" textLength="71" lengthAdjust="spacingAndGlyphs">Item(s) Saved</text>
<text x="1012" y="761" class="w" textLength="27" lengthAdjust="spacingAndGlyphs">Ln 62</text>
<text x="1104" y="761" class="w" textLength="26" lengthAdjust="spacingAndGlyphs">Col 5</text>
<text x="1197" y="761" class="w" textLength="23" lengthAdjust="spacingAndGlyphs">Ch 5</text>
<text x="1332" y="761" class="w" textLength="18" lengthAdjust="spacingAndGlyphs">INS</text>
</svg>
</body></html>
